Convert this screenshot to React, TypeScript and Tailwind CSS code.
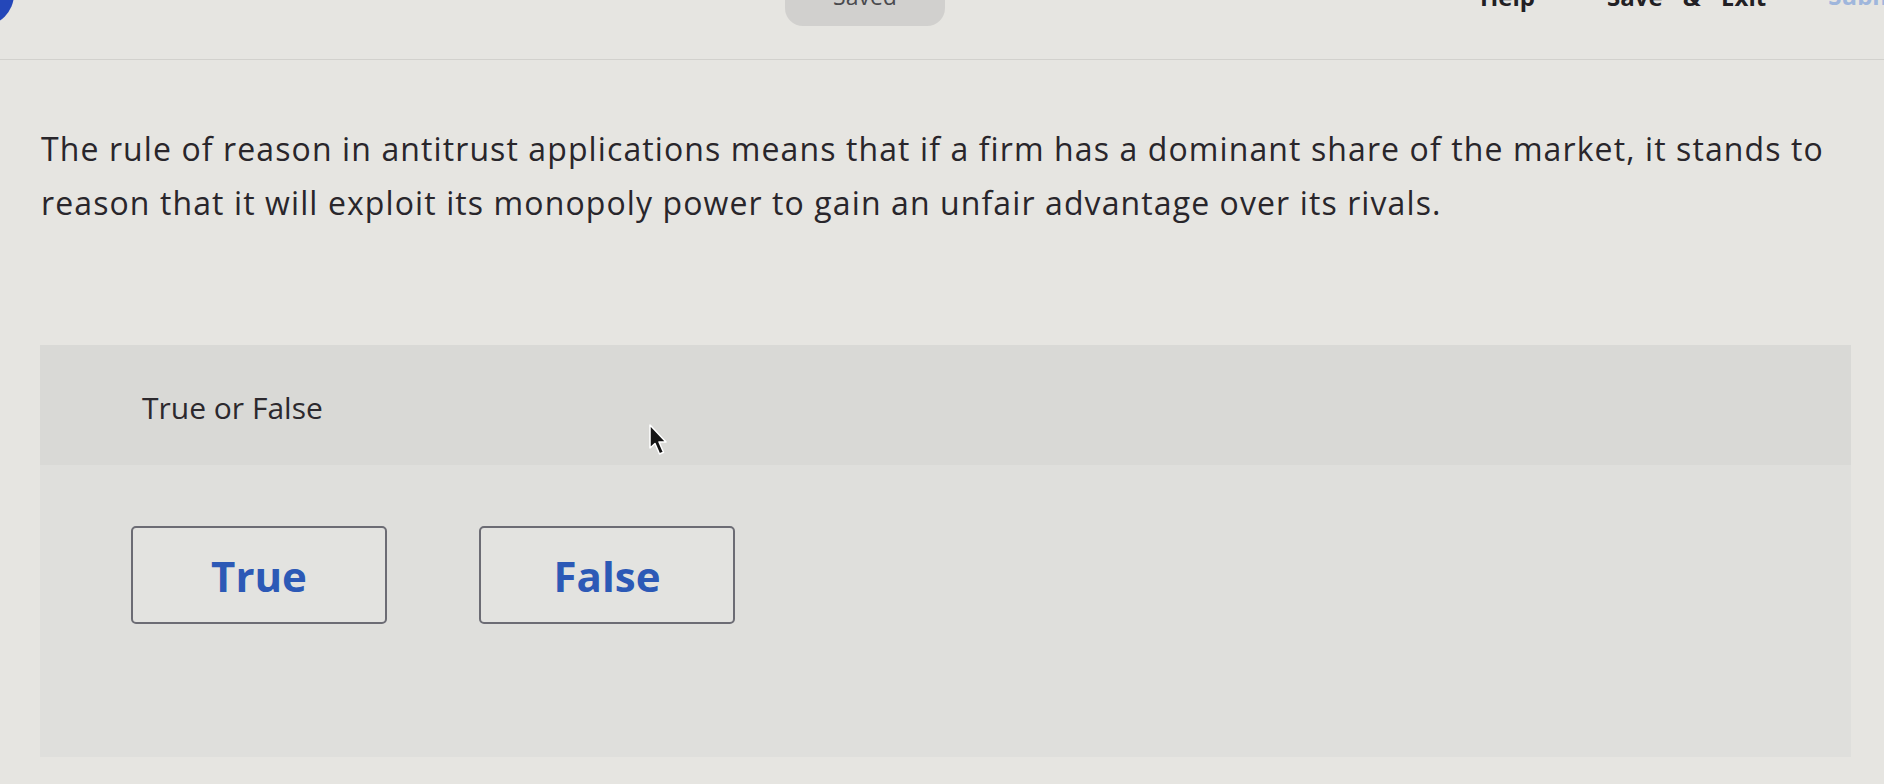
import React from 'react';

const font = { fontFamily: '"Open Sans", Lato, "Noto Sans", sans-serif' };

const Cursor = () => (
  <svg
    className="absolute left-[648px] top-[424px]"
    width="22"
    height="34"
    viewBox="0 0 22 34"
  >
    <path
      d="M2 1 L2 24 L7 19.5 L11.5 30 L15.5 28.3 L11 18 L18 18 Z"
      fill="#141414"
      stroke="#ffffff"
      strokeWidth="1.5"
      strokeLinejoin="round"
    />
  </svg>
);

export default function App() {
  return (
    <div
      className="relative h-[784px] w-full overflow-hidden bg-[#e6e5e1] text-[#29262b]"
      style={font}
    >
      {/* top bar, mostly scrolled off the photo */}
      <header className="relative flex h-[60px] items-start overflow-hidden whitespace-nowrap border-b border-[#d2d1cd]">
        <div className="-ml-[50px] -mt-[38px] h-[64px] w-[64px] shrink-0 rounded-full bg-[#2447b9]" />
        <div className="ml-[771px] flex h-[26px] w-[160px] shrink-0 justify-center rounded-b-[18px] bg-[#d1d0ce]">
          <span className="-mt-[19px] text-[23px] leading-[30px] text-[#4a4a4e]">Saved</span>
        </div>
        <div className="ml-[535px] -mt-[18px] shrink-0">
          <span className="text-[24px] font-bold leading-[30px] text-[#222024]">Help</span>
        </div>
        <div className="ml-[72px] -mt-[18px] shrink-0">
          <span className="text-[24px] font-bold leading-[30px] text-[#222024] [word-spacing:14px]">Save &amp; Exit</span>
        </div>
        <div className="ml-[62px] -mt-[19px] shrink-0">
          <span className="text-[24px] font-bold leading-[30px] text-[#9fb6dc]">Submit</span>
        </div>
      </header>

      {/* question prompt */}
      <div className="px-[41px] pt-[62px]">
        <p className="whitespace-nowrap text-[32px] leading-[54px] tracking-[1.1px]">
          The rule of reason in antitrust applications means that if a firm has a dominant share of the market, it stands to
          <br />
          reason that it will exploit its monopoly power to gain an unfair advantage over its rivals.
        </p>
      </div>

      {/* answer panel */}
      <div className="ml-[40px] mr-[33px] mt-[115px] h-[412px] bg-[#dfdfdc]">
        <div className="h-[120px] bg-[#d9d9d6] pl-[102px] pt-[45px]">
          <span className="text-[30px] leading-[36px] text-[#2c292e]">True or False</span>
        </div>
        <div className="flex gap-[92px] pl-[91px] pt-[61px]">
          {['True', 'False'].map((label) => (
            <button
              key={label}
              className="flex h-[98px] w-[256px] items-center justify-center rounded-[5px] border-2 border-[#6c6c74] bg-[#e3e3e0] text-[42px] font-bold text-[#2c59b6]"
            >
              {label}
            </button>
          ))}
        </div>
      </div>

      <Cursor />
    </div>
  );
}
